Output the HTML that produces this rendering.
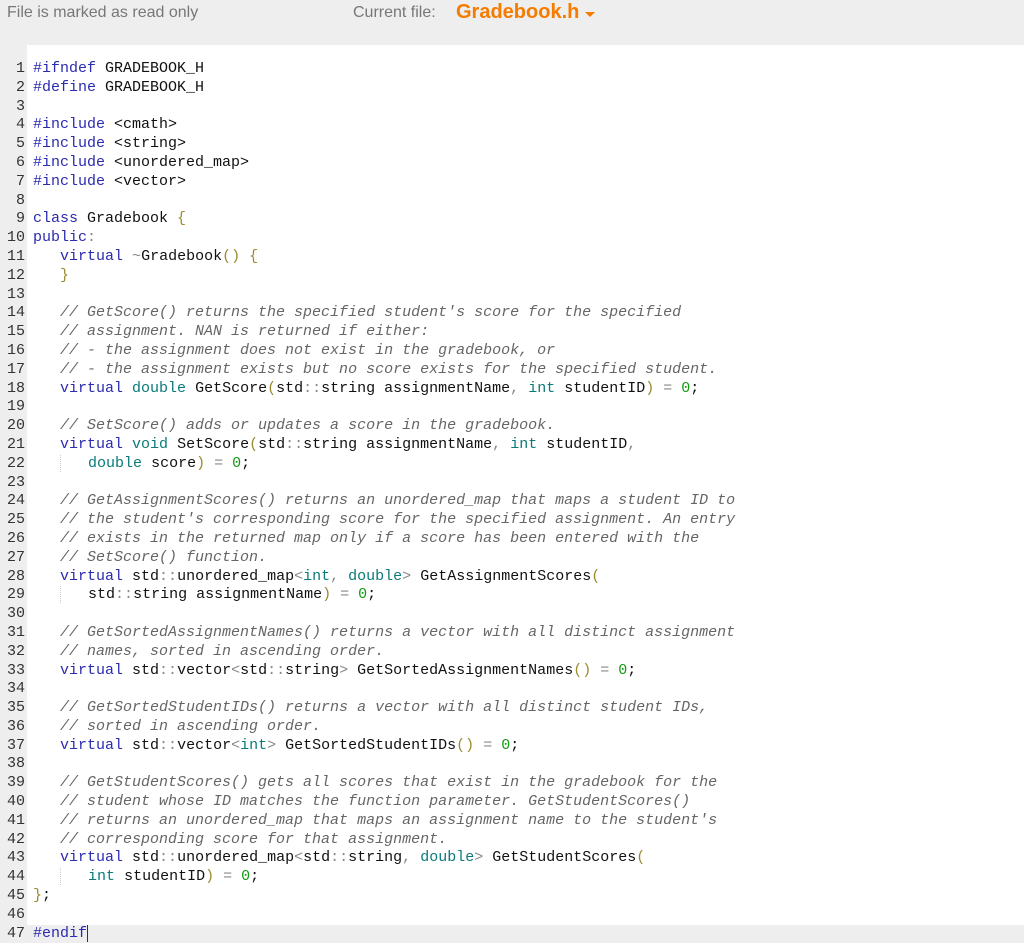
<!DOCTYPE html>
<html><head><meta charset="utf-8"><style>
body{margin:0;width:1024px;height:943px;overflow:hidden;background:#fff;font-family:"Liberation Sans",sans-serif}
.hdr{position:absolute;left:0;top:0;width:1024px;height:45px;background:#eeeeee}
.ro{position:absolute;left:7px;top:4px;font-size:16px;color:#777}
.cf{position:absolute;left:353px;top:4px;font-size:16px;color:#777}
.gb{position:absolute;left:456px;top:1px;font-size:20px;color:#f57c00;font-weight:bold}
.tri{position:absolute;left:585px;top:12px;width:0;height:0;border-left:5px solid transparent;border-right:5px solid transparent;border-top:5px solid #f57c00}
.gut{position:absolute;left:0;top:45px;width:27px;height:898px;background:#eeeeee}
.code{position:absolute;left:0;top:60px;width:1024px;font-family:"Liberation Mono",monospace;font-size:15px;line-height:18.8px;color:#111}
.l{height:18.8px;white-space:pre;position:relative}
.l b{font-weight:normal;display:inline-block;width:25px;text-align:right;color:#333;margin-right:8px}
.act{background:#eeeeee}
.k{color:#2b2bb0}.t{color:#0a7a7a}.c{color:#666;font-style:italic}.p{color:#9a8a30}.n{color:#119911}.o{color:#888}
.g{border-left:1px dotted #ccc}
</style></head><body>
<div class="hdr"><span class="ro">File is marked as read only</span><span class="cf">Current file:</span><span class="gb">Gradebook.h</span><span class="tri"></span></div>
<div class="gut"></div>
<div class="code">
<div class="l"><b>1</b><span class="k">#ifndef</span> GRADEBOOK_H</div>
<div class="l"><b>2</b><span class="k">#define</span> GRADEBOOK_H</div>
<div class="l"><b>3</b></div>
<div class="l"><b>4</b><span class="k">#include</span> &lt;cmath&gt;</div>
<div class="l"><b>5</b><span class="k">#include</span> &lt;string&gt;</div>
<div class="l"><b>6</b><span class="k">#include</span> &lt;unordered_map&gt;</div>
<div class="l"><b>7</b><span class="k">#include</span> &lt;vector&gt;</div>
<div class="l"><b>8</b></div>
<div class="l"><b>9</b><span class="k">class</span> Gradebook <span class="p">{</span></div>
<div class="l"><b>10</b><span class="k">public</span><span class="o">:</span></div>
<div class="l"><b>11</b>   <span class="k">virtual</span> <span class="o">~</span>Gradebook<span class="p">()</span> <span class="p">{</span></div>
<div class="l"><b>12</b>   <span class="p">}</span></div>
<div class="l"><b>13</b></div>
<div class="l"><b>14</b>   <span class="c">// GetScore() returns the specified student's score for the specified</span></div>
<div class="l"><b>15</b>   <span class="c">// assignment. NAN is returned if either:</span></div>
<div class="l"><b>16</b>   <span class="c">// - the assignment does not exist in the gradebook, or</span></div>
<div class="l"><b>17</b>   <span class="c">// - the assignment exists but no score exists for the specified student.</span></div>
<div class="l"><b>18</b>   <span class="k">virtual</span> <span class="t">double</span> GetScore<span class="p">(</span>std<span class="o">::</span>string assignmentName<span class="o">,</span> <span class="t">int</span> studentID<span class="p">)</span> <span class="o">=</span> <span class="n">0</span>;</div>
<div class="l"><b>19</b></div>
<div class="l"><b>20</b>   <span class="c">// SetScore() adds or updates a score in the gradebook.</span></div>
<div class="l"><b>21</b>   <span class="k">virtual</span> <span class="t">void</span> SetScore<span class="p">(</span>std<span class="o">::</span>string assignmentName<span class="o">,</span> <span class="t">int</span> studentID<span class="o">,</span></div>
<div class="l"><b>22</b>   <span class="g">  </span> <span class="t">double</span> score<span class="p">)</span> <span class="o">=</span> <span class="n">0</span>;</div>
<div class="l"><b>23</b></div>
<div class="l"><b>24</b>   <span class="c">// GetAssignmentScores() returns an unordered_map that maps a student ID to</span></div>
<div class="l"><b>25</b>   <span class="c">// the student's corresponding score for the specified assignment. An entry</span></div>
<div class="l"><b>26</b>   <span class="c">// exists in the returned map only if a score has been entered with the</span></div>
<div class="l"><b>27</b>   <span class="c">// SetScore() function.</span></div>
<div class="l"><b>28</b>   <span class="k">virtual</span> std<span class="o">::</span>unordered_map<span class="o">&lt;</span><span class="t">int</span><span class="o">,</span> <span class="t">double</span><span class="o">&gt;</span> GetAssignmentScores<span class="p">(</span></div>
<div class="l"><b>29</b>   <span class="g">  </span> std<span class="o">::</span>string assignmentName<span class="p">)</span> <span class="o">=</span> <span class="n">0</span>;</div>
<div class="l"><b>30</b></div>
<div class="l"><b>31</b>   <span class="c">// GetSortedAssignmentNames() returns a vector with all distinct assignment</span></div>
<div class="l"><b>32</b>   <span class="c">// names, sorted in ascending order.</span></div>
<div class="l"><b>33</b>   <span class="k">virtual</span> std<span class="o">::</span>vector<span class="o">&lt;</span>std<span class="o">::</span>string<span class="o">&gt;</span> GetSortedAssignmentNames<span class="p">()</span> <span class="o">=</span> <span class="n">0</span>;</div>
<div class="l"><b>34</b></div>
<div class="l"><b>35</b>   <span class="c">// GetSortedStudentIDs() returns a vector with all distinct student IDs,</span></div>
<div class="l"><b>36</b>   <span class="c">// sorted in ascending order.</span></div>
<div class="l"><b>37</b>   <span class="k">virtual</span> std<span class="o">::</span>vector<span class="o">&lt;</span><span class="t">int</span><span class="o">&gt;</span> GetSortedStudentIDs<span class="p">()</span> <span class="o">=</span> <span class="n">0</span>;</div>
<div class="l"><b>38</b></div>
<div class="l"><b>39</b>   <span class="c">// GetStudentScores() gets all scores that exist in the gradebook for the</span></div>
<div class="l"><b>40</b>   <span class="c">// student whose ID matches the function parameter. GetStudentScores()</span></div>
<div class="l"><b>41</b>   <span class="c">// returns an unordered_map that maps an assignment name to the student's</span></div>
<div class="l"><b>42</b>   <span class="c">// corresponding score for that assignment.</span></div>
<div class="l"><b>43</b>   <span class="k">virtual</span> std<span class="o">::</span>unordered_map<span class="o">&lt;</span>std<span class="o">::</span>string<span class="o">,</span> <span class="t">double</span><span class="o">&gt;</span> GetStudentScores<span class="p">(</span></div>
<div class="l"><b>44</b>   <span class="g">  </span> <span class="t">int</span> studentID<span class="p">)</span> <span class="o">=</span> <span class="n">0</span>;</div>
<div class="l"><b>45</b><span class="p">}</span>;</div>
<div class="l"><b>46</b></div>
<div class="l act"><b>47</b><span class="k">#endif</span><span style="border-left:1px solid #333"></span></div>
</div>
</body></html>
